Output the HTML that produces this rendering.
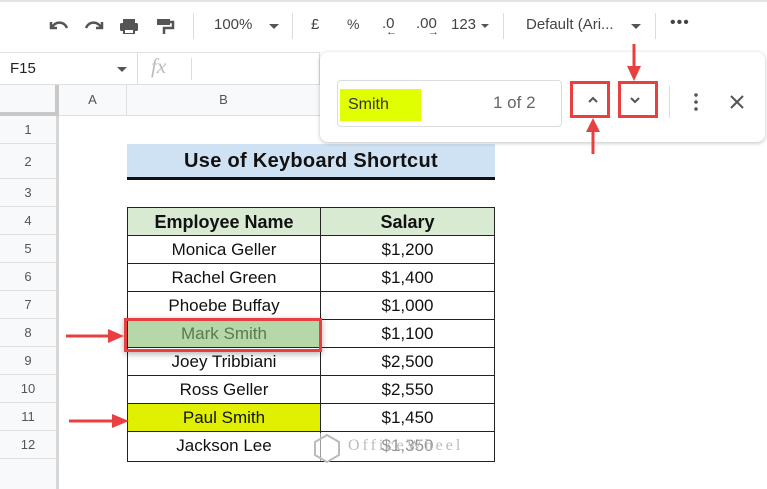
<!DOCTYPE html>
<html><head><style>
*{margin:0;padding:0;box-sizing:border-box}
body{width:767px;height:489px;overflow:hidden;background:#fff;font-family:"Liberation Sans",Arial,sans-serif;position:relative}
.a{position:absolute}
.t{color:#444;font-size:15px}
.rh{position:absolute;left:0;width:59px;background:#f8f9fa;border-bottom:1px solid #e0e0e0;border-right:3px solid #d6d6d6;text-align:center;color:#555;font-size:13px}
.c{position:absolute;text-align:center;font-size:17px;color:#111;border:1px solid #222}
.sep{position:absolute;width:1px;background:#dadce0}
</style></head><body>
<div class="a" style="left:0;top:0;width:767px;height:2px;background:#e3e3e3"></div>
<!-- toolbar -->
<svg class="a" style="left:44px;top:14px" width="140" height="24" viewBox="0 0 140 24">
<path d="M7 8 L7 14 L13 14" fill="none" stroke="#555" stroke-width="2.5"/>
<path d="M8 13 C12 7 20 7 23 14" fill="none" stroke="#555" stroke-width="2.5"/>
<path d="M58 8 L58 14 L52 14" fill="none" stroke="#555" stroke-width="2.5"/>
<path d="M57 13 C53 7 45 7 42 14" fill="none" stroke="#555" stroke-width="2.5"/>
<rect x="79" y="5" width="12" height="4" fill="#555"/><rect x="76" y="9" width="18" height="8" rx="1.5" fill="#555"/><rect x="79" y="14" width="12" height="6" fill="#555"/><rect x="81" y="16" width="8" height="3" fill="#fff"/>
<rect x="113" y="5" width="13" height="6" fill="#555"/><path d="M126 8 H129 V14 H120 V20" fill="none" stroke="#555" stroke-width="2.5"/>
</svg>
<div class="sep" style="left:193px;top:13px;height:26px"></div>
<div class="a t" style="left:214px;top:16px">100%</div>
<div class="a" style="left:269px;top:24px;border:5px solid transparent;border-top-color:#555"></div>
<div class="sep" style="left:292px;top:13px;height:26px"></div>
<div class="a t" style="left:311px;top:16px">£</div>
<div class="a t" style="left:347px;top:16px;font-size:14px">%</div>
<div class="a t" style="left:382px;top:15px">.0</div>
<div class="a t" style="left:386px;top:26px;font-size:11px">←</div>
<div class="a t" style="left:416px;top:15px">.00</div>
<div class="a t" style="left:428px;top:26px;font-size:11px">→</div>
<div class="a t" style="left:451px;top:16px">123</div>
<div class="a" style="left:481px;top:24px;border:4px solid transparent;border-top-color:#555"></div>
<div class="sep" style="left:503px;top:13px;height:26px"></div>
<div class="a t" style="left:526px;top:16px">Default (Ari...</div>
<div class="a" style="left:631px;top:24px;border:5px solid transparent;border-top-color:#555"></div>
<div class="sep" style="left:655px;top:13px;height:26px"></div>
<div class="a t" style="left:670px;top:14px;font-size:16px;letter-spacing:1px">•••</div>
<!-- name box -->
<div class="a" style="left:0;top:52px;width:320px;height:33px;border-top:1px solid #e0e0e0;border-bottom:1px solid #e0e0e0;border-right:1px solid #e0e0e0"></div>
<div class="a" style="left:10px;top:60px;font-size:15px;color:#222">F15</div>
<div class="a" style="left:117px;top:67px;border:5px solid transparent;border-top-color:#555"></div>
<div class="sep" style="left:137px;top:53px;height:31px"></div>
<div class="a" style="left:151px;top:54px;font-family:'Liberation Serif',serif;font-style:italic;font-size:21px;color:#bbb">fx</div>
<div class="sep" style="left:191px;top:58px;height:22px"></div>
<!-- column headers -->
<div class="a" style="left:0;top:85px;width:59px;height:31px;background:#f8f9fa;border-right:4px solid #c8c8c8;border-bottom:4px solid #c8c8c8"></div>
<div class="a" style="left:59px;top:85px;width:68px;height:31px;background:#f8f9fa;border-right:1px solid #e0e0e0;border-bottom:1px solid #e0e0e0;text-align:center;font-size:13px;color:#555;line-height:30px">A</div>
<div class="a" style="left:127px;top:85px;width:193px;height:31px;background:#f8f9fa;border-bottom:1px solid #e0e0e0;text-align:center;font-size:13px;color:#555;line-height:30px">B</div>
<!-- row headers -->
<div class="rh" style="top:116px;height:28px;line-height:28px">1</div>
<div class="rh" style="top:144px;height:35px;line-height:35px">2</div>
<div class="rh" style="top:179px;height:28px;line-height:28px">3</div>
<div class="rh" style="top:207px;height:28px;line-height:28px">4</div>
<div class="rh" style="top:235px;height:28px;line-height:28px">5</div>
<div class="rh" style="top:263px;height:28px;line-height:28px">6</div>
<div class="rh" style="top:291px;height:28px;line-height:28px">7</div>
<div class="rh" style="top:319px;height:28px;line-height:28px">8</div>
<div class="rh" style="top:347px;height:28px;line-height:28px">9</div>
<div class="rh" style="top:375px;height:28px;line-height:28px">10</div>
<div class="rh" style="top:403px;height:28px;line-height:28px">11</div>
<div class="rh" style="top:431px;height:28px;line-height:28px">12</div>
<div class="rh" style="top:459px;height:30px;border-bottom:none"></div>
<!-- title -->
<div class="a" style="left:127px;top:144px;width:368px;height:36px;background:#cfe2f3;border-bottom:3px solid #111;text-align:center;font-weight:bold;font-size:20px;line-height:35px;color:#111;letter-spacing:.3px">Use of Keyboard Shortcut</div>
<!-- table -->
<div class="c" style="left:127px;top:207px;width:194px;height:29px;background:#d9ead3;font-weight:bold;font-size:18px;line-height:28px">Employee Name</div>
<div class="c" style="left:320px;top:207px;width:175px;height:29px;background:#d9ead3;font-weight:bold;font-size:18px;line-height:28px">Salary</div>
<div class="c" style="left:127px;top:235px;width:194px;height:29px;line-height:28px">Monica Geller</div><div class="c" style="left:320px;top:235px;width:175px;height:29px;line-height:28px">$1,200</div>
<div class="c" style="left:127px;top:263px;width:194px;height:29px;line-height:28px">Rachel Green</div><div class="c" style="left:320px;top:263px;width:175px;height:29px;line-height:28px">$1,400</div>
<div class="c" style="left:127px;top:291px;width:194px;height:29px;line-height:28px">Phoebe Buffay</div><div class="c" style="left:320px;top:291px;width:175px;height:29px;line-height:28px">$1,000</div>
<div class="c" style="left:127px;top:319px;width:194px;height:29px;line-height:28px;background:#b6d7a8;color:#5a7a50">Mark Smith</div><div class="c" style="left:320px;top:319px;width:175px;height:29px;line-height:28px">$1,100</div>
<div class="c" style="left:127px;top:347px;width:194px;height:29px;line-height:28px">Joey Tribbiani</div><div class="c" style="left:320px;top:347px;width:175px;height:29px;line-height:28px">$2,500</div>
<div class="c" style="left:127px;top:375px;width:194px;height:29px;line-height:28px">Ross Geller</div><div class="c" style="left:320px;top:375px;width:175px;height:29px;line-height:28px">$2,550</div>
<div class="c" style="left:127px;top:403px;width:194px;height:29px;line-height:28px;background:#e0f000">Paul Smith</div><div class="c" style="left:320px;top:403px;width:175px;height:29px;line-height:28px">$1,450</div>
<div class="c" style="left:127px;top:431px;width:194px;height:31px;line-height:28px">Jackson Lee</div><div class="c" style="left:320px;top:431px;width:175px;height:31px;line-height:28px">$1,350</div>
<div class="a" style="left:124px;top:318px;width:198px;height:34px;border:3px solid #e84040;box-shadow:0 2px 6px rgba(0,0,0,.3)"></div>
<div class="a" style="left:318px;top:433px;width:140px;height:28px;background:rgba(255,255,255,.55)"></div>
<div class="a" style="left:348px;top:437px;font-family:'Liberation Serif',serif;font-size:16px;color:#bbb;letter-spacing:3px">OfficeWheel</div>
<svg class="a" style="left:312px;top:432px" width="30" height="32"><path d="M15 3 L27 10 V23 L15 30 L3 23 V10 Z" fill="none" stroke="#bbb" stroke-width="2"/></svg>
<!-- find panel -->
<div class="a" style="left:320px;top:52px;width:445px;height:90px;background:#fff;border-radius:8px;box-shadow:0 1px 4px rgba(0,0,0,.25)"></div>
<div class="a" style="left:337px;top:80px;width:225px;height:47px;border:1px solid #dadce0;border-radius:4px"></div>
<div class="a" style="left:340px;top:89px;width:81px;height:32px;background:#e0ff00;font-size:16px;line-height:32px;padding-left:8px;color:#333">Smith</div>
<div class="a" style="left:493px;top:93px;font-size:17px;color:#666">1 of 2</div>
<div class="a" style="left:570px;top:81px;width:40px;height:37px;border:3px solid #e84040"></div>
<div class="a" style="left:618px;top:81px;width:40px;height:37px;border:3px solid #e84040"></div>
<svg class="a" style="left:580px;top:90px" width="80" height="20"><path d="M9 12 L13 8 L17 12" fill="none" stroke="#555" stroke-width="2"/><path d="M51 8 L55 12 L59 8" fill="none" stroke="#555" stroke-width="2"/></svg>
<div class="sep" style="left:669px;top:86px;height:32px"></div>
<svg class="a" style="left:690px;top:90px" width="60" height="24"><circle cx="6" cy="5" r="1.8" fill="#555"/><circle cx="6" cy="12" r="1.8" fill="#555"/><circle cx="6" cy="19" r="1.8" fill="#555"/><path d="M41 6 L53 18 M53 6 L41 18" stroke="#555" stroke-width="2"/></svg>
<!-- arrows -->
<svg class="a" style="left:0;top:0" width="767" height="489">
<g stroke="#e84040" stroke-width="3" fill="#e84040">
<line x1="66" y1="336" x2="112" y2="336"/><path d="M108 329 L124 336 L108 343 Z" stroke="none"/>
<line x1="69" y1="421" x2="116" y2="421"/><path d="M112 414 L129 421 L112 428 Z" stroke="none"/>
<line x1="634" y1="44" x2="634" y2="68"/><path d="M627 66 L634 81 L641 66 Z" stroke="none"/>
<line x1="593" y1="154" x2="593" y2="130"/><path d="M586 132 L593 118 L600 132 Z" stroke="none"/>
</g></svg>
</body></html>
